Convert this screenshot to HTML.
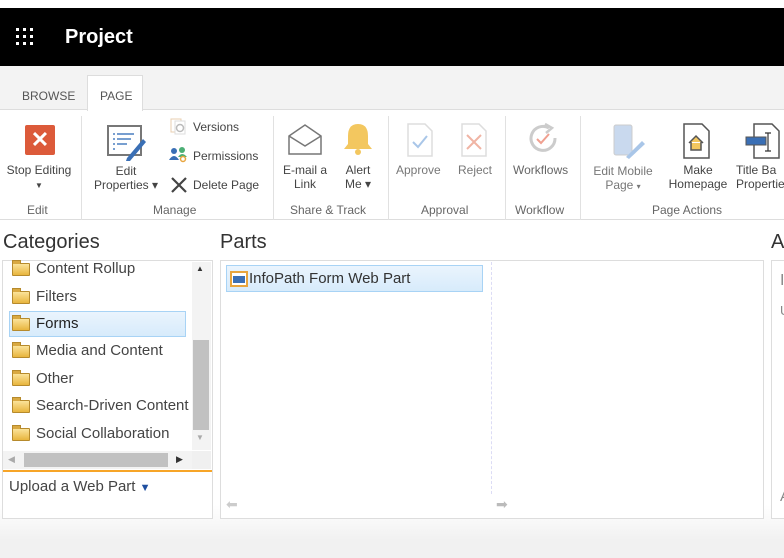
<!DOCTYPE html>
<html><head><meta charset="utf-8"><style>
*{margin:0;padding:0;box-sizing:border-box}
body{width:784px;height:558px;overflow:hidden;background:#fff;font-family:"Liberation Sans",sans-serif;position:relative;color:#444}
.a{position:absolute;white-space:nowrap}
.t{font-size:12px;color:#444;text-align:center;line-height:14px}
.g{font-size:12px;color:#666}
.sep{position:absolute;top:116px;width:1px;height:104px;background:#e1e1e1}
.cat{position:absolute;left:10px;height:24px;width:176px;font-size:15px;color:#444;line-height:24px;padding-left:26px}
.fold{position:absolute;left:2px;top:6px;width:18px;height:13px;background:linear-gradient(#fbe39a,#e8b53e);border:1px solid #b68a2c;border-radius:1px}
.fold:before{content:"";position:absolute;left:-1px;top:-4px;width:7px;height:3px;background:#d9a942;border:1px solid #b68a2c;border-bottom:none}
</style></head><body>
<div class="a" style="left:0;top:8px;width:784px;height:58px;background:#000"></div>
<svg class="a" style="left:16px;top:28px" width="20" height="20"><g fill="#fff"><rect x="0" y="0" width="3" height="3"/><rect x="7" y="0" width="3" height="3"/><rect x="14" y="0" width="3" height="3"/><rect x="0" y="7" width="3" height="3"/><rect x="7" y="7" width="3" height="3"/><rect x="14" y="7" width="3" height="3"/><rect x="0" y="14" width="3" height="3"/><rect x="7" y="14" width="3" height="3"/><rect x="14" y="14" width="3" height="3"/></g></svg>
<div class="a" style="left:65px;top:26px;font-size:20px;font-weight:bold;color:#fff">Project</div>
<div class="a" style="left:0;top:66px;width:784px;height:44px;background:#f3f3f3;border-bottom:1px solid #ddd"></div>
<div class="a" style="left:22px;top:89px;font-size:12px;color:#555">BROWSE</div>
<div class="a" style="left:87px;top:75px;width:56px;height:36px;background:#fff;border:1px solid #ddd;border-bottom:none"></div>
<div class="a" style="left:100px;top:89px;font-size:12px;color:#555">PAGE</div>
<div class="a" style="left:0;top:219px;width:784px;height:1px;background:#ddd"></div>
<div class="sep" style="left:81px"></div><div class="sep" style="left:273px"></div><div class="sep" style="left:388px"></div><div class="sep" style="left:505px"></div><div class="sep" style="left:580px"></div>
<div class="a" style="left:25px;top:125px;width:30px;height:30px;background:#dc5a3a;border-radius:2px;color:#fff;font-size:22px;font-weight:bold;text-align:center;line-height:30px">✕</div>
<div class="a t" style="left:0;top:163px;width:78px">Stop Editing<br><span style="font-size:8px">▼</span></div>
<div class="a g" style="left:27px;top:203px">Edit</div>
<svg class="a" style="left:107px;top:124px" width="40" height="38"><rect x="1" y="2" width="33" height="29" fill="#fff" stroke="#777" stroke-width="2"/><g stroke="#4a7fc0" stroke-width="1.5"><line x1="6" y1="10" x2="8" y2="10"/><line x1="10" y1="10" x2="27" y2="10"/><line x1="6" y1="15" x2="8" y2="15"/><line x1="10" y1="15" x2="24" y2="15"/><line x1="6" y1="20" x2="8" y2="20"/><line x1="10" y1="20" x2="20" y2="20"/><line x1="6" y1="25" x2="8" y2="25"/></g><path d="M20 34 L36 15 L39 18 L23 37 L19 37Z" fill="#3a6fb5"/></svg>
<div class="a t" style="left:86px;top:164px;width:80px">Edit<br>Properties ▾</div>
<svg class="a" style="left:170px;top:118px" width="18" height="18"><rect x="1" y="1" width="10" height="13" fill="none" stroke="#e8cfb0"/><rect x="5" y="3" width="10" height="13" fill="#fff" stroke="#ddd"/><circle cx="10" cy="10" r="3.5" fill="none" stroke="#bbb" stroke-width="1.5"/></svg>
<div class="a t" style="left:193px;top:120px">Versions</div>
<svg class="a" style="left:169px;top:146px" width="20" height="18"><circle cx="5" cy="5" r="3" fill="#3a6fb5"/><path d="M0 14 Q5 6 10 14Z" fill="#3a6fb5"/><circle cx="13" cy="4" r="3" fill="#4caf75"/><path d="M9 11 Q13 5 18 11Z" fill="#4caf75"/><circle cx="14" cy="13" r="2.5" fill="none" stroke="#e8a53e" stroke-width="1.5"/></svg>
<div class="a t" style="left:193px;top:149px">Permissions</div>
<svg class="a" style="left:170px;top:176px" width="18" height="18"><path d="M2 2 L16 16 M16 2 L2 16" stroke="#444" stroke-width="2.2"/></svg>
<div class="a t" style="left:193px;top:178px">Delete Page</div>
<div class="a g" style="left:153px;top:203px">Manage</div>
<svg class="a" style="left:287px;top:122px" width="36" height="34"><path d="M2 14 L18 3 L34 14 L34 32 L2 32Z" fill="#fff" stroke="#777" stroke-width="1.5"/><path d="M2 14 L18 24 L34 14" fill="none" stroke="#777" stroke-width="1.5"/></svg>
<div class="a t" style="left:278px;top:163px;width:54px">E-mail a<br>Link</div>
<svg class="a" style="left:342px;top:122px" width="32" height="34"><path d="M16 2 Q6 2 6 14 L6 22 L2 27 L30 27 L26 22 L26 14 Q26 2 16 2Z" fill="#f3c75f"/><circle cx="16" cy="30" r="3" fill="#f3c75f"/></svg>
<div class="a t" style="left:336px;top:163px;width:44px">Alert<br>Me ▾</div>
<div class="a g" style="left:290px;top:203px">Share &amp; Track</div>
<svg class="a" style="left:407px;top:123px" width="26" height="34"><path d="M1 1 L18 1 L25 8 L25 33 L1 33Z" fill="#fff" stroke="#ddd" stroke-width="1.5"/><path d="M6 19 L11 24 L20 13" fill="none" stroke="#a9c6e8" stroke-width="2"/></svg>
<div class="a t" style="left:396px;top:163px;color:#777">Approve</div>
<svg class="a" style="left:461px;top:123px" width="26" height="34"><path d="M1 1 L18 1 L25 8 L25 33 L1 33Z" fill="#fff" stroke="#ddd" stroke-width="1.5"/><path d="M6 12 L20 26 M20 12 L6 26" stroke="#f0b4a4" stroke-width="2"/></svg>
<div class="a t" style="left:458px;top:163px;color:#777">Reject</div>
<div class="a g" style="left:421px;top:203px">Approval</div>
<svg class="a" style="left:527px;top:122px" width="32" height="34"><path d="M22 6 A12 12 0 1 0 28 16" fill="none" stroke="#ccc" stroke-width="3"/><path d="M18 2 L25 6 L19 11" fill="none" stroke="#ccc" stroke-width="2.5"/><path d="M10 17 L14 21 L22 12" fill="none" stroke="#f0a090" stroke-width="2"/></svg>
<div class="a t" style="left:513px;top:163px;color:#666">Workflows</div>
<div class="a g" style="left:515px;top:203px">Workflow</div>
<svg class="a" style="left:612px;top:123px" width="34" height="38"><rect x="2" y="2" width="18" height="30" rx="2" fill="#c9d9ee" stroke="#ccc"/><path d="M14 34 L30 18 L33 21 L17 36Z" fill="#a9c6e8"/></svg>
<div class="a t" style="left:588px;top:164px;width:70px;color:#777">Edit Mobile<br>Page <span style="font-size:8px">▾</span></div>
<svg class="a" style="left:683px;top:123px" width="28" height="36"><path d="M1 1 L19 1 L26 8 L26 35 L1 35Z" fill="#fff" stroke="#555" stroke-width="1.5"/><path d="M6 20 L13 13 L20 20 M8 19 L8 27 L18 27 L18 19" fill="#f3c75f" stroke="#555" stroke-width="1.5"/></svg>
<div class="a t" style="left:664px;top:163px;width:68px">Make<br>Homepage</div>
<svg class="a" style="left:744px;top:123px" width="40" height="36"><path d="M10 1 L28 1 L35 8 L35 35 L10 35Z" fill="#fff" stroke="#555" stroke-width="1.5"/><rect x="2" y="14" width="20" height="8" fill="#3a6fb5" stroke="#555"/><path d="M24 10 L24 28 M21 10 L27 10 M21 28 L27 28" stroke="#333" stroke-width="1.2"/></svg>
<div class="a t" style="left:736px;top:163px;text-align:left">Title Ba<br>Propertie</div>
<div class="a g" style="left:652px;top:203px">Page Actions</div>
<div class="a" style="left:0;top:505px;width:784px;height:53px;background:linear-gradient(#fff,#f1f1f1 35px)"></div>
<div class="a" style="left:3px;top:231px;font-size:20px;color:#333">Categories</div>
<div class="a" style="left:220px;top:231px;font-size:20px;color:#333">Parts</div>
<div class="a" style="left:771px;top:231px;font-size:20px;color:#333">A</div>
<div class="a" style="left:2px;top:260px;width:211px;height:259px;border:1px solid #ddd;background:#fff"></div>
<div class="cat" style="top:257px"><span class="fold"></span>Content Rollup</div>
<div class="cat" style="top:285px"><span class="fold"></span>Filters</div>
<div class="a" style="left:9px;top:311px;width:177px;height:26px;background:linear-gradient(#eaf4fd,#d7ebfb);border:1px solid #a8d3f5"></div>
<div class="cat" style="top:312px;color:#222"><span class="fold"></span>Forms</div>
<div class="cat" style="top:339px"><span class="fold"></span>Media and Content</div>
<div class="cat" style="top:367px"><span class="fold"></span>Other</div>
<div class="cat" style="top:394px;width:182px;overflow:hidden"><span class="fold"></span>Search-Driven Content</div>
<div class="cat" style="top:422px"><span class="fold"></span>Social Collaboration</div>
<div class="a" style="left:192px;top:262px;width:19px;height:188px;background:#f3f3f3"></div>
<div class="a" style="left:196px;top:264px;font-size:8px;color:#333">▲</div>
<div class="a" style="left:193px;top:340px;width:16px;height:90px;background:#c1c1c1"></div>
<div class="a" style="left:196px;top:433px;font-size:8px;color:#aaa">▼</div>
<div class="a" style="left:3px;top:451px;width:189px;height:18px;background:#f3f3f3"></div>
<div class="a" style="left:8px;top:454px;font-size:9px;color:#aaa">◀</div>
<div class="a" style="left:24px;top:453px;width:144px;height:14px;background:#c1c1c1"></div>
<div class="a" style="left:176px;top:454px;font-size:9px;color:#333">▶</div>
<div class="a" style="left:192px;top:451px;width:19px;height:18px;background:#f0f0f0"></div>
<div class="a" style="left:3px;top:470px;width:209px;height:2px;background:#f7a528"></div>
<div class="a" style="left:9px;top:478px;font-size:15px;color:#444">Upload a Web Part <span style="color:#1f4fa0;font-size:11px">▼</span></div>
<div class="a" style="left:220px;top:260px;width:544px;height:259px;border:1px solid #ddd;background:#fff"></div>
<div class="a" style="left:226px;top:265px;width:257px;height:27px;background:linear-gradient(#eaf4fd,#d7ebfb);border:1px solid #a8d3f5"></div>
<div class="a" style="left:230px;top:271px;width:18px;height:16px;border:2px solid #e8a53e;background:#fff"><div style="margin:3px 1px;height:7px;background:#3a6fb5"></div></div>
<div class="a" style="left:249px;top:270px;font-size:15px;color:#333">InfoPath Form Web Part</div>
<div class="a" style="left:491px;top:262px;width:0;height:232px;border-left:1px dashed #dcdcf5"></div>
<div class="a" style="left:226px;top:496px;font-size:14px;color:#ccc">⬅</div>
<div class="a" style="left:496px;top:496px;font-size:14px;color:#bbb">➡</div>
<div class="a" style="left:771px;top:260px;width:20px;height:259px;border:1px solid #ddd;background:#fff"></div>
<div class="a" style="left:780px;top:272px;font-size:16px;color:#888">I</div>
<div class="a" style="left:780px;top:303px;font-size:13px;color:#888">U</div>
<div class="a" style="left:780px;top:488px;font-size:15px;color:#888">A</div>
</body></html>
